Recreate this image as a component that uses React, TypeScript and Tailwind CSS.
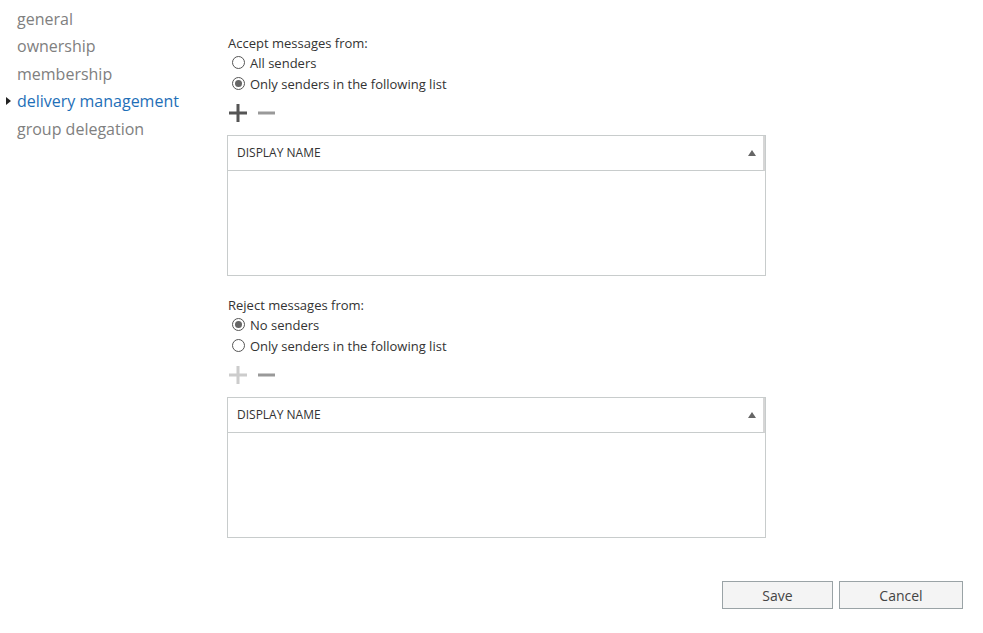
import React from 'react';

const navItems = ['general', 'ownership', 'membership', 'delivery management', 'group delegation'];

function Radio({ checked, label }: { checked: boolean; label: string }) {
  return (
    <label className="flex items-center h-[21px] pl-[5px] text-[13px] text-[#333]">
      <span className="flex items-center justify-center w-[13px] h-[13px] rounded-full border border-[#555] bg-white mr-[5px] -mt-[2px]">
        {checked && <span className="w-[7px] h-[7px] rounded-full bg-[#666]" />}
      </span>
      {label}
    </label>
  );
}

function PlusMinus({ plusOn, minusOn }: { plusOn: boolean; minusOn: boolean }) {
  return (
    <div className="flex items-center gap-[11px] h-[20px] pl-[2px]">
      <svg width="18" height="18" viewBox="0 0 18 18">
        <rect x="7.5" y="0" width="3" height="18" fill={plusOn ? '#555' : '#ccc'} />
        <rect x="0" y="7.5" width="18" height="3" fill={plusOn ? '#555' : '#ccc'} />
      </svg>
      <svg width="17" height="18" viewBox="0 0 17 18">
        <rect x="0" y="7.5" width="17" height="3" fill={minusOn ? '#555' : '#999'} />
      </svg>
    </div>
  );
}

function SenderTable() {
  return (
    <div className="w-[539px] h-[141px] border border-[#c8cccc] bg-white">
      <div className="flex items-center justify-between h-[35px] border-b border-[#c8cccc] pl-[9px] pr-[7px] text-[12px] text-[#333] border-r-2 border-r-[#d6d6d6]">
        <span>DISPLAY NAME</span>
        <svg width="8" height="6" viewBox="0 0 8 6">
          <polygon points="4,0 8,6 0,6" fill="#666" />
        </svg>
      </div>
    </div>
  );
}

function Section({ title, first, second, plusOn }: { title: string; first: [string, boolean]; second: [string, boolean]; plusOn: boolean }) {
  return (
    <div className="flex flex-col">
      <div className="text-[13px] text-[#333] leading-[20px] pl-[1px]">{title}</div>
      <Radio label={first[0]} checked={first[1]} />
      <Radio label={second[0]} checked={second[1]} />
      <div className="mt-[8px]">
        <PlusMinus plusOn={plusOn} minusOn={false} />
      </div>
      <div className="mt-[12px]">
        <SenderTable />
      </div>
    </div>
  );
}

export default function App() {
  return (
    <div className="w-[983px] h-[633px] bg-white flex flex-col" style={{ fontFamily: '"Segoe UI", "Open Sans", "Noto Sans", sans-serif' }}>
      <div className="flex flex-1">
        <nav className="w-[227px] pt-[5px] flex flex-col">
          {navItems.map((item) => {
            const active = item === 'delivery management';
            return (
              <div key={item} className="flex items-center h-[27.5px] text-[16px]">
                <span className="w-[17px] flex justify-start pl-[6px]">
                  {active && (
                    <svg width="5" height="8" viewBox="0 0 5 8">
                      <polygon points="0,0 5,4 0,8" fill="#222" />
                    </svg>
                  )}
                </span>
                <span className={active ? 'text-[#1e6fb8]' : 'text-[#808080]'}>{item}</span>
              </div>
            );
          })}
        </nav>
        <main className="pt-[33px] flex flex-col gap-[19px]">
          <Section
            title="Accept messages from:"
            first={['All senders', false]}
            second={['Only senders in the following list', true]}
            plusOn={true}
          />
          <Section
            title="Reject messages from:"
            first={['No senders', true]}
            second={['Only senders in the following list', false]}
            plusOn={false}
          />
        </main>
      </div>
      <div className="flex justify-end gap-[6px] pr-[20px] pb-[24px]">
        <button className="w-[111px] h-[28px] border border-[#9aa3a6] bg-[#f4f4f4] text-[14px] text-[#444]">Save</button>
        <button className="w-[124px] h-[28px] border border-[#9aa3a6] bg-[#f4f4f4] text-[14px] text-[#444]">Cancel</button>
      </div>
    </div>
  );
}
